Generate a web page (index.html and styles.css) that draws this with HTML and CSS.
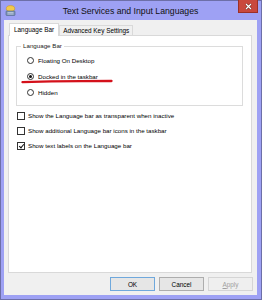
FILE: index.html
```html
<!DOCTYPE html>
<html lang="en">
<head>
  <meta charset="UTF-8">
  <title>Text Services and Input Languages</title>
  <link rel="stylesheet" href="styles.css">
</head>
<body>

  <div class="window">
    <div class="titlebar">
      <svg class="app-icon" width="11" height="11" viewBox="0 0 11 11">
        <ellipse cx="5.5" cy="3.6" rx="4.2" ry="3" fill="#f2c94c" stroke="#c9962a" stroke-width="0.6"/>
        <rect x="1" y="6" width="9" height="4.5" rx="0.8" fill="#7d93b5" stroke="#4f6488" stroke-width="0.6"/>
        <path d="M2.5 7.6h6M2.5 9h6" stroke="#dfe7f3" stroke-width="0.6"/>
      </svg>
      <div class="title">Text Services and Input Languages</div>
      <div class="close">
        <svg width="7" height="7" viewBox="0 0 7 7">
          <path d="M1 1L6 6M6 1L1 6" stroke="#5a1a14" stroke-width="2.4"/>
          <path d="M1 1L6 6M6 1L1 6" stroke="#fff" stroke-width="1.3"/>
        </svg>
      </div>
    </div>

    <div class="client">
      <div class="tabs">
        <div class="tab active">Language Bar</div>
        <div class="tab">Advanced Key Settings</div>
      </div>

      <div class="panel">
        <fieldset class="group">
          <legend>Language Bar</legend>
          <label class="option"><span class="radio"></span>Floating On Desktop</label>
          <label class="option"><span class="radio checked"></span>Docked in the taskbar</label>
          <label class="option"><span class="radio"></span>Hidden</label>
          <svg class="scribble" width="92" height="5" viewBox="0 0 92 5">
            <path d="M1.5 3.2Q30 2.4 60 2.2T90.5 2" fill="none" stroke="#d4111b" stroke-width="2.3" stroke-linecap="round"/>
          </svg>
        </fieldset>

        <div class="checks">
          <label class="check"><span class="box"></span>Show the Language bar as transparent when inactive</label>
          <label class="check"><span class="box"></span>Show additional Language bar icons in the taskbar</label>
          <label class="check"><span class="box checked"></span>Show text labels on the Language bar</label>
        </div>
      </div>

      <div class="buttons">
        <button class="btn default">OK</button>
        <button class="btn">Cancel</button>
        <button class="btn" disabled><u>A</u>pply</button>
      </div>
    </div>
  </div>

</body>
</html>
```

FILE: styles.css
```css
* {
  box-sizing: border-box;
}

body {
  margin: 0;
  font-family: "Liberation Sans", Arial, sans-serif;
  font-size: 6.2px;
  color: #000;
}

.window {
  width: 262px;
  height: 300px;
  background: #9ea1f4;
  border: 1px solid #6d6fa8;
  padding: 0 4px 4px 3px;
  display: flex;
  flex-direction: column;
}

.titlebar {
  height: 19px;
  display: grid;
  grid-template-columns: 1fr auto 1fr;
  align-items: center;
}

.app-icon {
  margin-left: 1px;
  margin-top: -1px;
}

.title {
  font-size: 8.7px;
  color: #111;
}

.close {
  justify-self: end;
  align-self: start;
  width: 20px;
  height: 13px;
  margin-top: -1px;
  margin-right: -1px;
  background: #c9483d;
  border: 1px solid #9c3027;
  border-top: none;
  display: flex;
  align-items: center;
  justify-content: center;
}

.client {
  flex: 1;
  background: #f0f0f0;
  padding: 3px 5px 0 4px;
  display: flex;
  flex-direction: column;
}

.tabs {
  display: flex;
  align-items: flex-end;
  height: 12px;
  margin-left: 1px;
  font-size: 6.4px;
  position: relative;
  z-index: 1;
}

.tab {
  height: 10px;
  padding: 0 3px;
  border: 1px solid #d9d9d9;
  border-bottom: none;
  background: #f0f0f0;
  line-height: 9px;
}

.tab.active {
  height: 13px;
  margin-bottom: -1px;
  padding: 0 4px;
  background: #fff;
  line-height: 12px;
}

.panel {
  height: 238px;
  background: #fff;
  border: 1px solid #d9d9d9;
}

.group {
  position: relative;
  margin: 6px 8px 0 7px;
  padding: 2px 4px 5px 4px;
  border: 1px solid #dcdcdc;
}

.group legend {
  padding: 0 2px;
  line-height: 8px;
  color: #222;
}

.option {
  display: flex;
  align-items: center;
  height: 16px;
  margin-left: 6px;
}

.radio {
  width: 7px;
  height: 7px;
  margin-right: 4px;
  border: 1px solid #333;
  border-radius: 50%;
  background: #fff;
  display: flex;
  align-items: center;
  justify-content: center;
}

.radio.checked::after {
  content: "";
  width: 3px;
  height: 3px;
  border-radius: 50%;
  background: #111;
}

.scribble {
  position: absolute;
  left: 4px;
  top: 29px;
}

.checks {
  margin-top: 2px;
  padding-left: 8px;
}

.check {
  display: flex;
  align-items: center;
  height: 15px;
}

.box {
  width: 8px;
  height: 8px;
  margin-right: 3px;
  border: 1px solid #333;
  background: #fff;
  position: relative;
}

.box.checked::after {
  content: "";
  position: absolute;
  left: 1.5px;
  top: 0;
  width: 2px;
  height: 4px;
  border: solid #111;
  border-width: 0 1.3px 1.3px 0;
  transform: rotate(40deg);
}

.buttons {
  display: flex;
  justify-content: flex-end;
  gap: 4px;
  margin-top: 4px;
  margin-right: -1px;
}

.btn {
  width: 45px;
  height: 14px;
  padding: 0;
  font-family: inherit;
  font-size: 6.4px;
  color: #000;
  background: #e6e6e6;
  border: 1px solid #adadad;
}

.btn.default {
  border-color: #6fa8dc;
}

.btn:disabled {
  color: #a0a0a0;
  background: #efefef;
  border-color: #d5d5d5;
}
```
